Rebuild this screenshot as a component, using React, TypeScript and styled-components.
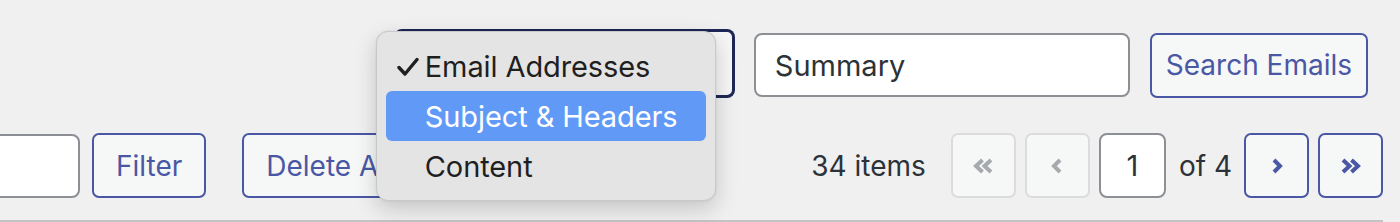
import React from 'react'
import styled, { createGlobalStyle } from 'styled-components'

const GlobalStyle = createGlobalStyle`
    html, body {
        margin: 0;
        padding: 0;
        background: #f0f0f1;
        font-family: Inter, "Noto Sans", "Liberation Sans", sans-serif;
        color: #2c3338;
        overflow: hidden;
    }
`

const Page = styled.div`
    width: 1400px;
    height: 222px;
    overflow: hidden;
    padding-top: 33px;
    box-sizing: border-box;
`

const SearchBox = styled.div`
    display: flex;
    justify-content: flex-end;
    align-items: center;
    gap: 20px;
    padding-right: 32px;
    height: 64px;
`

const SelectWrap = styled.div`
    position: relative;
    align-self: flex-start;
    margin-top: -3px;
    width: 339px;
    height: 67px;
`

/* focused select, its value is covered by the open menu */
const Select = styled.div`
    width: 100%;
    height: 100%;
    box-sizing: border-box;
    border: 2px solid #1f2757;
    box-shadow: 0 0 0 1px #1f2757;
    border-radius: 7px;
    background: #f6f6f7;
`

const Menu = styled.ul`
    position: absolute;
    top: 1px;
    left: -19px;
    width: 340px;
    margin: 0;
    padding: 9px;
    box-sizing: border-box;
    list-style: none;
    background: #e4e4e4;
    border: 1px solid #c9c9c9;
    border-radius: 12px;
    box-shadow: 0 8px 22px rgba(0, 0, 0, 0.18), 0 0 2px rgba(0, 0, 0, 0.1);
    z-index: 10;
`

const MenuItem = styled.li<{ active?: boolean }>`
    position: relative;
    height: 50px;
    display: flex;
    align-items: center;
    padding-left: 39px;
    border-radius: 6px;
    font-size: 29px;
    letter-spacing: -0.1px;
    color: ${p => (p.active ? '#ffffff' : '#1f1f1f')};
    background: ${p => (p.active ? '#6199f7' : 'transparent')};

    svg {
        position: absolute;
        left: 11px;
        top: 16px;
    }
`

const TextInput = styled.div<{ width: number }>`
    width: ${p => p.width}px;
    height: 64px;
    box-sizing: border-box;
    background: #fff;
    border: 2px solid #8c8f94;
    border-radius: 8px;
    display: flex;
    align-items: center;
    padding: 0 19px;
    font-size: 29px;
    color: #2c3338;
`

const Button = styled.button<{ disabled?: boolean; square?: boolean; pad?: number }>`
    height: 65px;
    min-width: ${p => (p.square ? '65px' : 'auto')};
    box-sizing: border-box;
    padding: ${p => (p.square ? '0' : `0 ${p.pad ?? 22}px`)};
    border: 2px solid ${p => (p.disabled ? '#dcdcde' : '#4a57a4')};
    border-radius: 7px;
    background: #f6f7f7;
    color: ${p => (p.disabled ? '#a7aaad' : '#4a57a4')};
    font-family: inherit;
    font-size: 28px;
    display: flex;
    align-items: center;
    justify-content: center;
    cursor: pointer;
`

const Tablenav = styled.div`
    display: flex;
    align-items: center;
    margin-top: 36px;
    padding-right: 17px;
    height: 65px;
`

const Actions = styled.div`
    display: flex;
    align-items: center;
    gap: 12px;
    margin-left: -40px;
`

const BulkActions = styled.div`
    margin-left: 36px;
`

const Pages = styled.div`
    margin-left: auto;
    display: flex;
    align-items: center;
    gap: 9px;
`

const Count = styled.span`
    font-size: 28px;
    margin-right: 16px;
`

const PageInput = styled(TextInput)`
    justify-content: center;
    padding: 0;
    height: 65px;
`

const OfTotal = styled.span`
    font-size: 28px;
    margin: 0 3px 0 4px;
`

const Table = styled.div`
    margin-top: 22px;
    margin-right: 17px;
    border-top: 2px solid #c3c4c7;
`

const Check = () => (
    <svg width="22" height="20" viewBox="0 0 22 20">
        <path d="M2 10.5 L8 17 L20 2.5" fill="none" stroke="#1f1f1f" strokeWidth="3.4" strokeLinecap="round" strokeLinejoin="round" />
    </svg>
)

const Chevron = ({ double, left }: { double?: boolean; left?: boolean }) => (
    <svg width="22" height="20" viewBox="0 0 22 20" style={{ transform: left ? 'scaleX(-1)' : undefined }}>
        {double ? (
            <>
                <path d="M3 4 L9.5 10 L3 16" fill="none" stroke="currentColor" strokeWidth="4" />
                <path d="M11.5 4 L18 10 L11.5 16" fill="none" stroke="currentColor" strokeWidth="4" />
            </>
        ) : (
            <path d="M8 4 L14 10 L8 16" fill="none" stroke="currentColor" strokeWidth="4" />
        )}
    </svg>
)

export default function App() {
    return (
        <Page>
            <GlobalStyle />
            <SearchBox>
                <SelectWrap>
                    <Select />
                    <Menu>
                        <MenuItem><Check />Email Addresses</MenuItem>
                        <MenuItem active>Subject &amp; Headers</MenuItem>
                        <MenuItem>Content</MenuItem>
                    </Menu>
                </SelectWrap>
                <TextInput width={376}>Summary</TextInput>
                <Button pad={14}>Search Emails</Button>
            </SearchBox>
            <Tablenav>
                <Actions>
                    <TextInput width={120} />
                    <Button>Filter</Button>
                </Actions>
                <BulkActions>
                    <Button>Delete All</Button>
                </BulkActions>
                <Pages>
                    <Count>34 items</Count>
                    <Button square disabled><Chevron double left /></Button>
                    <Button square disabled><Chevron left /></Button>
                    <PageInput width={67}>1</PageInput>
                    <OfTotal>of 4</OfTotal>
                    <Button square><Chevron /></Button>
                    <Button square><Chevron double /></Button>
                </Pages>
            </Tablenav>
            <Table />
        </Page>
    )
}
